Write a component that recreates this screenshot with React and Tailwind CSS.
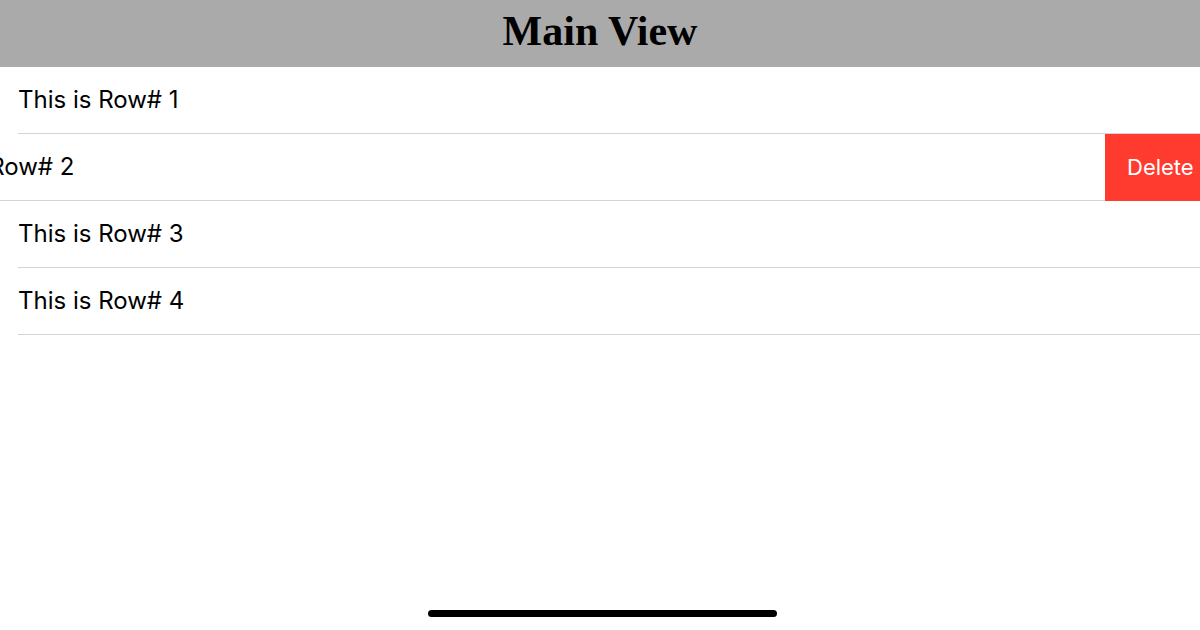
export default function App() {
    return (
        <div className="w-[1200px] h-[630px] bg-white overflow-hidden flex flex-col font-['Inter','Liberation_Sans',sans-serif]">
            {/* Header */}
            <div className="h-[67px] bg-[#aaaaaa] flex items-center justify-center">
                <h1 className="text-[42px] font-bold text-black font-['Liberation_Serif',serif] leading-none mt-[-6px]">
                    Main View
                </h1>
            </div>

            {/* List */}
            <div className="flex flex-col">
                <div className="flex items-center h-[67px] border-b border-[#d4d4d4] ml-[18px]">
                    <span className="text-[24px] text-black">This is Row# 1</span>
                </div>

                {/* Swiped row */}
                <div className="flex h-[67px]">
                    <div className="flex-1 flex items-center overflow-hidden border-b border-[#d4d4d4]">
                        <span className="text-[24px] text-black whitespace-nowrap ml-[-91px]">
                            This is Row# 2
                        </span>
                    </div>
                    <div className="w-[95px] bg-[#ff3b30] flex items-center pl-[22px]">
                        <span className="text-[22px] text-white">Delete</span>
                    </div>
                </div>

                <div className="flex items-center h-[67px] border-b border-[#d4d4d4] ml-[18px]">
                    <span className="text-[24px] text-black">This is Row# 3</span>
                </div>
                <div className="flex items-center h-[67px] border-b border-[#d4d4d4] ml-[18px]">
                    <span className="text-[24px] text-black">This is Row# 4</span>
                </div>
            </div>

            {/* Home indicator */}
            <div className="mt-auto mb-[13px] flex justify-center">
                <div className="w-[349px] h-[7px] bg-black rounded-full ml-[4px]"></div>
            </div>
        </div>
    );
}
